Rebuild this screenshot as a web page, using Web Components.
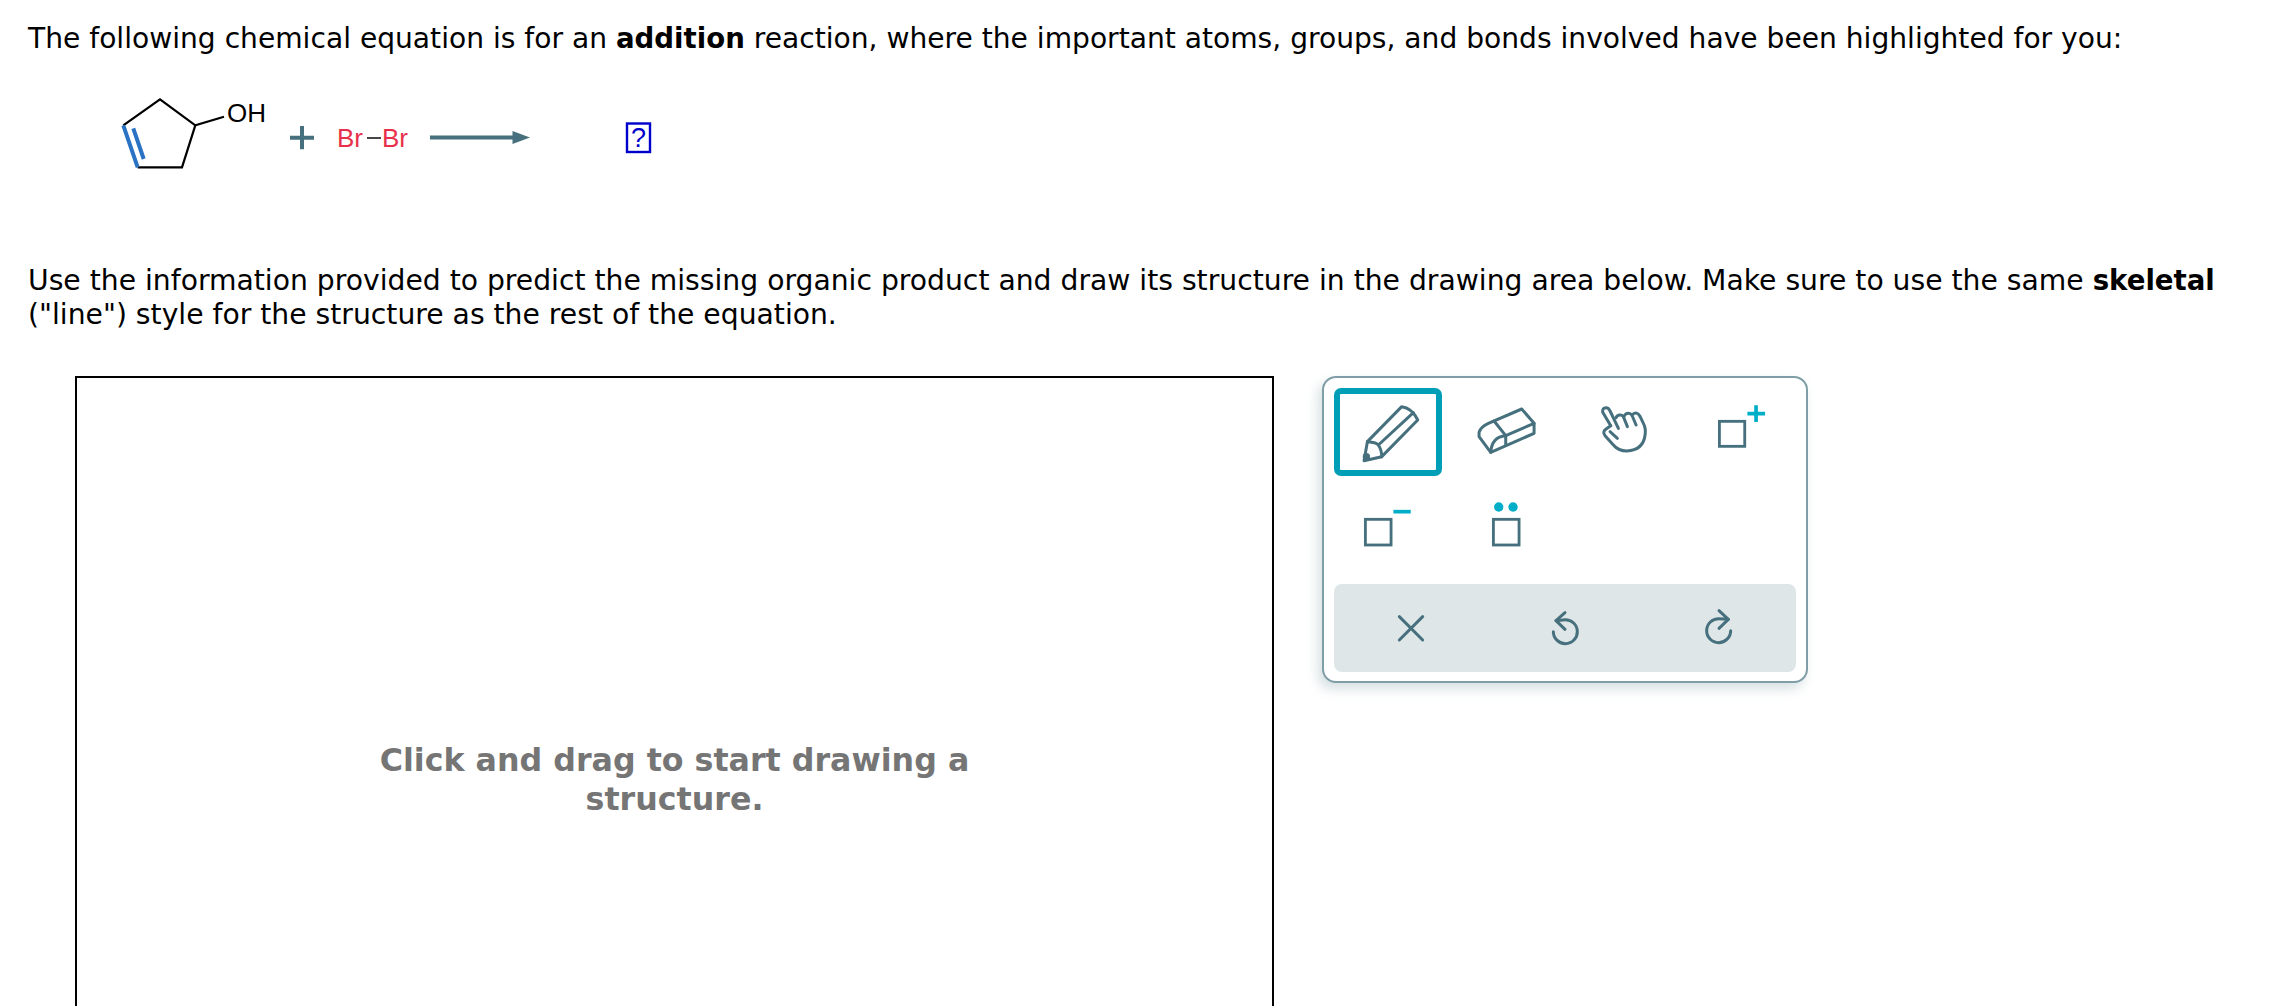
<!DOCTYPE html>
<html>
<head>
<meta charset="utf-8">
<title>Addition reaction</title>
<style>
    html, body { margin: 0; height: 100%; overflow: hidden; background: #fff; }
    body { font-family: "DejaVu Sans", sans-serif; font-size: 28.14px; line-height: 34.5px; color: #000; }
    b { font-size: 27.6px; }
</style>
</head>
<body>
<question-page>
    <question-text style="--top: 22px">The following chemical equation is for an <b>addition</b> reaction, where the important atoms, groups, and bonds involved have been highlighted for you:</question-text>
    <reaction-equation></reaction-equation>
    <question-text style="--top: 74px; font-size: 28.22px">Use the information provided to predict the missing organic product and draw its structure in the drawing area below. Make sure to use the same <b>skeletal</b> ("line") style for the structure as the rest of the equation.</question-text>
    <drawing-workspace>
        <drawing-canvas>Click and drag to start drawing a structure.</drawing-canvas>
        <tool-palette>
            <tool-button name="pencil" active></tool-button>
            <tool-button name="eraser"></tool-button>
            <tool-button name="hand"></tool-button>
            <tool-button name="charge-plus"></tool-button>
            <tool-button name="charge-minus"></tool-button>
            <tool-button name="lone-pair"></tool-button>
            <tool-bar slot="bar">
                <tool-button name="clear"></tool-button>
                <tool-button name="undo"></tool-button>
                <tool-button name="redo"></tool-button>
            </tool-bar>
        </tool-palette>
    </drawing-workspace>
</question-page>

<script>
const STROKE = 'fill="none" stroke="#46707d" stroke-width="9" stroke-linejoin="round" stroke-linecap="round"';
const BOX = 'fill="none" stroke="#46707d" stroke-width="8.5"';
const ACCENT = '#00aec7';

// view boxes are in 3x pixels so the paths read straight off the zoomed reference
const ICONS = {
    pencil: { view: '-48 -21 322.5 264', svg: `
        <g ${STROKE}>
            <path d="M52 140 L155 35 Q185 38 203 75 L95 185 L42 197 Z"/>
            <path d="M52 140 Q80 142 85 150 Q95 165 95 185"/>
            <path d="M85 150 L190 53"/>
        </g>
        <circle cx="49" cy="185" r="11" fill="#46707d"/>` },
    eraser: { view: '-54 -21 322.5 264', svg: `
        <g ${STROKE}>
            <path d="M27 112 Q32 95 55 85 L155 42 L192 85 L192 115 L62 172 L27 125 Z"/>
            <path d="M72 78 L107 122 L192 85"/>
            <path d="M107 122 L107 150"/>
            <path d="M107 122 Q65 125 62 172"/>
        </g>` },
    hand: { view: '-60 -21 322.5 264', svg: `
        <g ${STROKE}>
            <path d="M62 92 L38 52 Q36 38 48 38 Q56 38 60 48 L85 100"/>
            <path d="M78 68 Q82 58 92 60 Q98 60 102 70 L112 95"/>
            <path d="M102 64 Q108 52 120 56 Q125 58 128 66 L138 90"/>
            <path d="M128 58 Q140 48 150 64 L160 85 Q168 100 165 120 Q160 165 110 168 Q85 168 70 150 L45 122 Q36 110 48 102 L62 92"/>
            <path d="M60 110 L82 130"/>
        </g>` },
    'charge-plus': { view: '384 70 322.5 264', svg: `
        <rect x="478" y="170" width="76" height="75" ${BOX}/>
        <path d="M562 147 H615 M588 122 V172" stroke="${ACCENT}" stroke-width="11" fill="none"/>` },
    'charge-minus': { view: '72 357 322.5 264', svg: `
        <rect x="166" y="463" width="77" height="77" ${BOX}/>
        <path d="M250 440 H302" stroke="${ACCENT}" stroke-width="11" fill="none"/>` },
    'lone-pair': { view: '426 357 322.5 264', svg: `
        <rect x="550" y="463" width="77" height="77" ${BOX}/>
        <circle cx="566" cy="426" r="14" fill="${ACCENT}"/>
        <circle cx="609" cy="426" r="14" fill="${ACCENT}"/>` },
    clear: { view: '0 0 462 264', svg: `
        <path d="M196 98 L266 168 M266 98 L196 168" ${STROKE}/>` },
    undo: { view: '-126 -48 462 264', svg: `
        <g ${STROKE}>
            <path d="M105 38 L78 62 L105 88"/>
            <path d="M78 62 L105 59 A36 36 0 1 1 70 95"/>
        </g>` },
    redo: { view: '336 -48 462 264', svg: `
        <g ${STROKE}>
            <path d="M567 32 L595 58 L567 85"/>
            <path d="M595 58 L567 56 A36 36 0 1 0 602 92"/>
        </g>` }
};

customElements.define('question-page', class QuestionPage extends HTMLElement {
    constructor() {
        super();
        const root = this.attachShadow({ mode: 'open' });
        root.innerHTML = `
            <style>
                :host { display: block; padding-left: 28px; }
            </style>
            <slot></slot>
        `;
    }
});

customElements.define('question-text', class QuestionText extends HTMLElement {
    constructor() {
        super();
        const root = this.attachShadow({ mode: 'open' });
        root.innerHTML = `
            <style>
                :host { display: block; padding-top: var(--top, 0); width: 2230px; }
            </style>
            <slot></slot>
        `;
    }
});

customElements.define('reaction-equation', class ReactionEquation extends HTMLElement {
    constructor() {
        super();
        const root = this.attachShadow({ mode: 'open' });
        root.innerHTML = `
            <style>
                :host { display: block; padding: 33px 0 0 72px; height: 100px; }
                svg { display: block; }
                text { font-family: "Liberation Sans", sans-serif; font-size: 26px; }
            </style>
            <svg width="560" height="100" viewBox="100 90 560 100">
                <path d="M224 116.7 L195.3 125.3 L160 99.3 L123.3 125.3 M137.7 167.3 H182 L195.3 125.3" fill="none" stroke="#000" stroke-width="2.2"/>
                <path d="M123.3 125.3 L137.7 167.3 M133.3 128.3 L143.7 159" fill="none" stroke="#2a72c4" stroke-width="4"/>
                <text x="227" y="122" fill="#000">OH</text>
                <path d="M290 137.7 H314 M302 126 V149.3" stroke="#46707d" stroke-width="4" fill="none"/>
                <text x="337" y="147" fill="#e8304a">Br</text>
                <path d="M367 138 H381" stroke="#333" stroke-width="1.8" fill="none"/>
                <text x="382" y="147" fill="#e8304a">Br</text>
                <path d="M430 137.5 H514" stroke="#46707d" stroke-width="4" fill="none"/>
                <path d="M512.5 131 L530 137.5 L512.5 144 Z" fill="#46707d"/>
                <rect x="627" y="123.5" width="23" height="28.5" fill="#fff" stroke="#0000cc" stroke-width="2.4"/>
                <text x="631" y="147" fill="#0000cc" style="font-size: 27px">?</text>
            </svg>
        `;
    }
});

customElements.define('drawing-workspace', class DrawingWorkspace extends HTMLElement {
    constructor() {
        super();
        const root = this.attachShadow({ mode: 'open' });
        root.innerHTML = `
            <style>
                :host { display: flex; align-items: flex-start; gap: 48px; padding: 43px 0 0 47px; }
            </style>
            <slot></slot>
        `;
    }
});

customElements.define('drawing-canvas', class DrawingCanvas extends HTMLElement {
    constructor() {
        super();
        const root = this.attachShadow({ mode: 'open' });
        root.innerHTML = `
            <style>
                :host {
                    display: flex; align-items: center; justify-content: center;
                    box-sizing: border-box; width: 1199px; height: 806px; padding-top: 2px;
                    border: 2px solid #000; flex: none;
                }
                div {
                    width: 640px; text-align: center;
                    font-weight: bold; font-size: 31.7px; line-height: 39px; color: #757575;
                }
            </style>
            <div><slot></slot></div>
        `;
    }
});

customElements.define('tool-palette', class ToolPalette extends HTMLElement {
    constructor() {
        super();
        const root = this.attachShadow({ mode: 'open' });
        root.innerHTML = `
            <style>
                :host {
                    display: block; box-sizing: border-box; flex: none; width: 486px; height: 307px;
                    padding: 10px; background: #fff;
                    border: 2px solid #7f9ea7; border-radius: 14px;
                    box-shadow: -4px 6px 12px rgba(70, 112, 125, .22);
                }
                .tools { display: grid; grid-template-columns: repeat(4, 1fr); grid-auto-rows: 88px; gap: 8px 10.5px; height: 184px; }
            </style>
            <div class="tools"><slot></slot></div>
            <slot name="bar"></slot>
        `;
    }
});

customElements.define('tool-button', class ToolButton extends HTMLElement {
    constructor() {
        super();
        this.attachShadow({ mode: 'open' });
    }

    connectedCallback() {
        const icon = ICONS[this.getAttribute('name')];
        this.shadowRoot.innerHTML = `
            <style>
                :host { display: block; box-sizing: border-box; }
                :host([active]) { box-shadow: inset 0 0 0 6px #009fb7; border-radius: 7px; }
                svg { display: block; width: 100%; height: 100%; }
            </style>
            <svg viewBox="${icon.view}">${icon.svg}</svg>
        `;
    }
});

customElements.define('tool-bar', class ToolBar extends HTMLElement {
    constructor() {
        super();
        const root = this.attachShadow({ mode: 'open' });
        root.innerHTML = `
            <style>
                :host {
                    display: grid; grid-template-columns: repeat(3, 1fr); height: 88px;
                    margin-top: 12px; background: #dfe6e8; border-radius: 8px;
                }
            </style>
            <slot></slot>
        `;
    }
});
</script>
</body>
</html>
